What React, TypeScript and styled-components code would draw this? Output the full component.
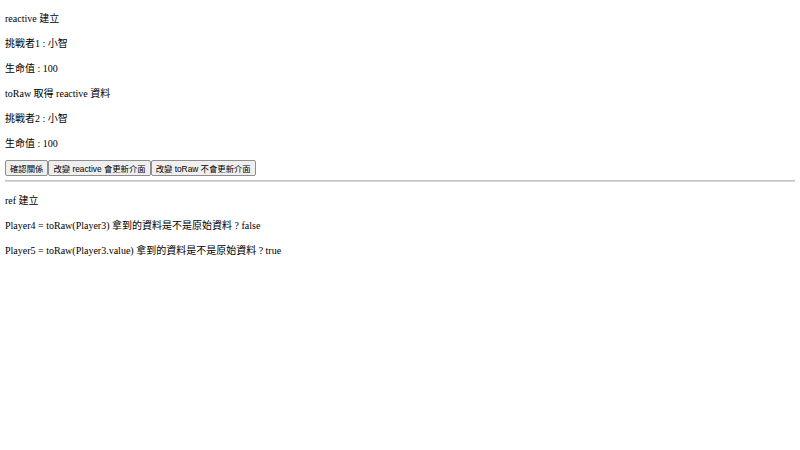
import styled, { createGlobalStyle } from 'styled-components';

const GlobalStyle = createGlobalStyle`
    body {
        margin: 0;
        font-family: "Liberation Serif", "Noto Sans CJK TC", serif;
        font-size: 10px;
        color: #000;
        background: #fff;
    }
`

const Page = styled.div`
    padding: 0 5px;
    & > p:first-child {
        margin-top: 10px;
    }
`

const Line = styled.p`
    margin: 10px 0;
`

const ButtonRow = styled.div`
    display: flex;
`

const Button = styled.button`
    font-family: "Liberation Sans", "Noto Sans CJK TC", sans-serif;
    font-size: 8.35px;
    height: 16px;
    padding: 0 4px;
    margin: 0;
    background: #efefef;
    border: 1px solid #8f8f8f;
    border-radius: 2px;
    color: #000;
`

const Divider = styled.hr`
    margin: 4px 0 5px;
    border: none;
    border-top: 1px solid #c6c6c6;
    border-bottom: 1px solid #d6d6d6;
`

const App = () => {
    const player1 = { name: '小智', hp: 100 }

    return (
        <Page>
            <GlobalStyle />
            <Line>reactive 建立</Line>
            <Line>挑戰者1 : {player1.name}</Line>
            <Line>生命值 : {player1.hp}</Line>
            <Line>toRaw 取得 reactive 資料</Line>
            <Line>挑戰者2 : {player1.name}</Line>
            <Line>生命值 : {player1.hp}</Line>
            <ButtonRow>
                <Button>確認關係</Button>
                <Button>改變 reactive 會更新介面</Button>
                <Button>改變 toRaw 不會更新介面</Button>
            </ButtonRow>
            <Divider />
            <Line>ref 建立</Line>
            <Line>Player4 = toRaw(Player3) 拿到的資料是不是原始資料 ? false</Line>
            <Line>Player5 = toRaw(Player3.value) 拿到的資料是不是原始資料 ? true</Line>
        </Page>
    )
}

export default App;
